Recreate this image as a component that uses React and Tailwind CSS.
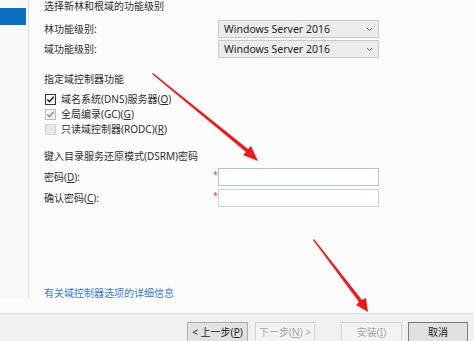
export default function App() {
  const font = "font-['Noto_Sans','Noto_Sans_CJK_SC',sans-serif]";

  const Chevron = () => (
    <svg width="7" height="5" viewBox="0 0 7 5" className="shrink-0">
      <path d="M1 1 L3.5 3.5 L6 1" fill="none" stroke="#666" strokeWidth="1" />
    </svg>
  );

  const Select = ({ value }) => (
    <div className="w-[161px] h-[18px] flex items-center justify-between pl-[5px] pr-[5px] bg-[#ececec] border border-[#cacaca] text-[10.5px] text-[#222]">
      <span className="leading-[16px]">{value}</span>
      <Chevron />
    </div>
  );

  const Check = ({ state }) => {
    if (state === "on") {
      return (
        <div className="w-[11px] h-[11px] border border-[#333] bg-white flex items-center justify-center">
          <svg width="9" height="9" viewBox="0 0 9 9">
            <path d="M1.3 4.6 L3.5 6.8 L7.8 1.6" fill="none" stroke="#111" strokeWidth="1.4" />
          </svg>
        </div>
      );
    }
    if (state === "grayOn") {
      return (
        <div className="w-[11px] h-[11px] border border-[#bcbcbc] bg-[#f4f4f4] flex items-center justify-center">
          <svg width="9" height="9" viewBox="0 0 9 9">
            <path d="M1.3 4.6 L3.5 6.8 L7.8 1.6" fill="none" stroke="#8a8a8a" strokeWidth="1.4" />
          </svg>
        </div>
      );
    }
    return <div className="w-[11px] h-[11px] border border-[#d4d4d4] bg-[#e8e8e8]" />;
  };

  const CheckRow = ({ state, children }) => (
    <div className="h-[15px] flex items-center pl-[1px]">
      <Check state={state} />
      <span className="ml-[5px] leading-[15px]">{children}</span>
    </div>
  );

  const u = (c) => <span className="underline underline-offset-[1px]">{c}</span>;

  return (
    <div className={`relative w-[474px] h-[341px] overflow-hidden bg-[#fcfcfc] text-[10px] text-[#2e2e2e] ${font}`}>
      <div className="flex h-[298px]">
        <div className="w-[29px] shrink-0 bg-[#f8f8f8] border-r border-[#dedede] pt-[8px]">
          <div className="w-[26px] h-[17px] bg-[#0b6fc3]" />
        </div>

        <div className="flex-1 pl-[15px]">
          <div className="h-[12px] leading-[12px] mt-0">选择新林和根域的功能级别</div>

          <div className="flex items-center mt-[8px]">
            <div className="w-[174px] leading-[18px]">林功能级别:</div>
            <Select value="Windows Server 2016" />
          </div>
          <div className="flex items-center mt-[2px]">
            <div className="w-[174px] leading-[18px]">域功能级别:</div>
            <Select value="Windows Server 2016" />
          </div>

          <div className="h-[12px] leading-[12px] mt-[15px]">指定域控制器功能</div>
          <div className="mt-[7px]">
            <CheckRow state="on">域名系统(DNS)服务器({u("O")})</CheckRow>
            <CheckRow state="grayOn">全局编录(GC)({u("G")})</CheckRow>
            <CheckRow state="off">只读域控制器(RODC)({u("R")})</CheckRow>
          </div>

          <div className="h-[12px] leading-[12px] mt-[13px]">键入目录服务还原模式(DSRM)密码</div>

          <div className="flex items-center mt-[6px]">
            <div className="w-[169px] leading-[18px]">密码({u("D")}):</div>
            <div className="w-[5px] text-[#e04040] text-[9px] leading-[9px] self-start mt-[2px]">*</div>
            <div className="w-[161px] h-[18px] bg-white border border-[#a9c3e2]" />
          </div>
          <div className="flex items-center mt-[3px]">
            <div className="w-[169px] leading-[18px]">确认密码({u("C")}):</div>
            <div className="w-[5px] text-[#e04040] text-[9px] leading-[9px] self-start mt-[2px]">*</div>
            <div className="w-[161px] h-[18px] bg-white border border-[#c9d0d8]" />
          </div>

          <div className="mt-[80px] h-[12px] leading-[12px] text-[#3b7cc6]">有关域控制器选项的详细信息</div>
        </div>
      </div>

      <div className="h-[15px]" />

      <div className="h-[28px] bg-[#f0f0f0] border-t border-[#e0e0e0] flex items-start justify-end pt-[8px] pr-[6px]">
        <div className="w-[61px] h-[20px] flex items-center justify-center bg-[#e1e1e1] border border-[#adadad] text-[#222]">
          &lt; 上一步({u("P")})
        </div>
        <div className="w-[60px] h-[20px] ml-[7px] flex items-center justify-center bg-[#f3f3f3] border border-[#d2d2d2] text-[#a6a6a6]">
          下一步({u("N")}) &gt;
        </div>
        <div className="w-[61px] h-[20px] ml-[26px] flex items-center justify-center bg-[#f3f3f3] border border-[#d2d2d2] text-[#a6a6a6]">
          安装({u("I")})
        </div>
        <div className="w-[60px] h-[20px] ml-[6px] flex items-center justify-center bg-[#e1e1e1] border border-[#7a7a7a] text-[#222]">
          取消
        </div>
      </div>

      <svg className="absolute inset-0 pointer-events-none" width="474" height="341" viewBox="0 0 474 341">
        <polygon points="152,74 153,73 248,149 251,146 258,161 243,155 246,152" fill="#f01818" />
        <polygon points="313,240 314,239 362,300 366,298 368,312 356,305 359,302" fill="#f01818" />
      </svg>
    </div>
  );
}
